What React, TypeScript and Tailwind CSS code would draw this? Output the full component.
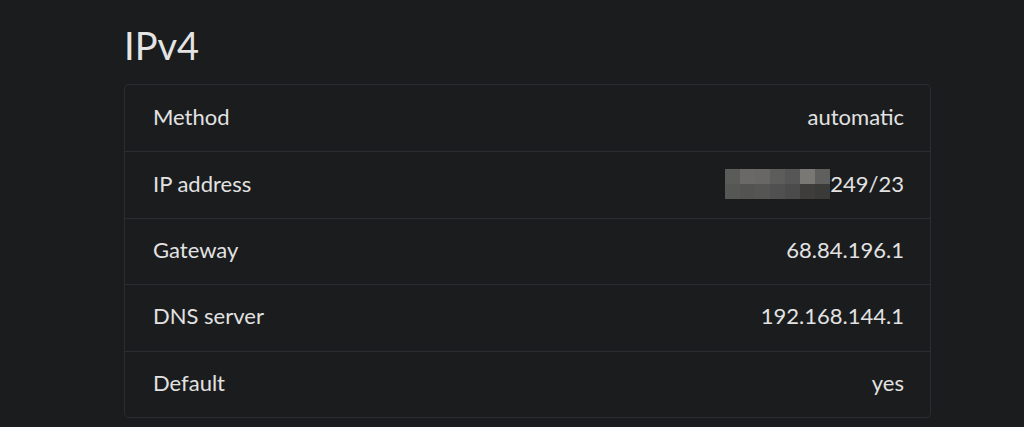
const rows = [
  { label: 'Method', value: 'automatic' },
  { label: 'IP address', value: '249/23', masked: true },
  { label: 'Gateway', value: '68.84.196.1' },
  { label: 'DNS server', value: '192.168.144.1' },
  { label: 'Default', value: 'yes' },
];

const maskTop = ['#5b5b5a', '#6a6967', '#686765', '#5d5d5c', '#565656', '#7a7874', '#5f5f5e'];
const maskBottom = ['#565655', '#535352', '#555554', '#505050', '#4b4b4b', '#3e3d3c', '#3a3a39'];

const Mask = () => (
  <div className="flex flex-col">
    <div className="flex">
      {maskTop.map((c, i) => (
        <span key={i} className="w-[15px] h-[15px]" style={{ backgroundColor: c }} />
      ))}
    </div>
    <div className="flex">
      {maskBottom.map((c, i) => (
        <span key={i} className="w-[15px] h-[15px]" style={{ backgroundColor: c }} />
      ))}
    </div>
  </div>
);

export default function App() {
  return (
    <div
      className="w-[1024px] h-[427px] overflow-hidden bg-[#1b1c1e] text-[#e2e2e2] pl-[124px] pt-[22px]"
      style={{ fontFamily: 'Lato, "Open Sans", sans-serif' }}
    >
      <h1 className="text-[38px] font-normal leading-[46px] text-[#e4e4e4]">IPv4</h1>

      <div className="mt-[16px] w-[807px] rounded-[5px] border border-[#2c2d30]">
        {rows.map((row, i) => (
          <div
            key={row.label}
            className={`flex items-center justify-between h-[66.4px] pl-[28px] pr-[26px] pb-[4px] text-[22px] ${
              i > 0 ? 'border-t border-[#2c2d30]' : ''
            }`}
          >
            <span>{row.label}</span>
            <span className="flex items-center">
              {row.masked && (
                <span className="mt-[2px]">
                  <Mask />
                </span>
              )}
              {row.value}
            </span>
          </div>
        ))}
      </div>
    </div>
  );
}
